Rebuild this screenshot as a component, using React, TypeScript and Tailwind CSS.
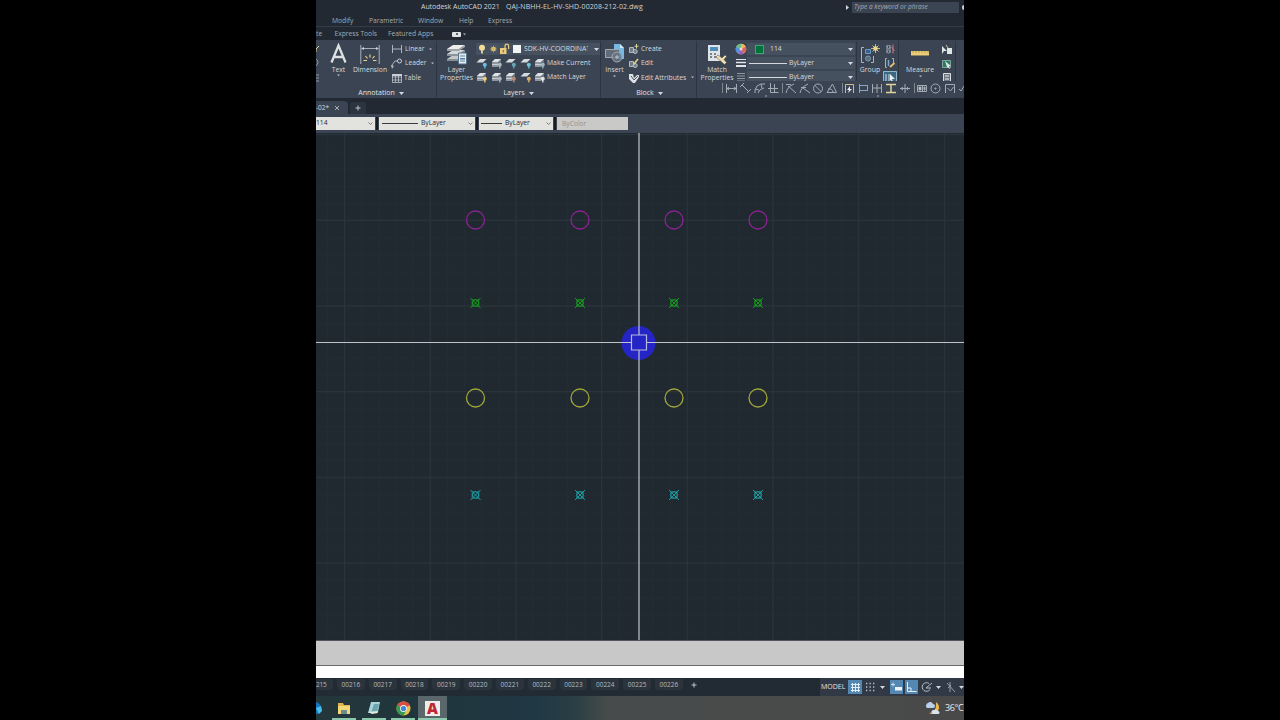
import React from 'react';

type IconProps = {
  w?: number;
  h?: number;
  className?: string;
  children: React.ReactNode;
};

const Icon = ({ w = 12, h = 12, className = '', children }: IconProps) => (
  <svg width={w} height={h} viewBox={`0 0 ${w} ${h}`} fill="none" className={`shrink-0 ${className}`}>
    {children}
  </svg>
);

const Arrow = ({ small = false }: { small?: boolean }) => (
  <Icon w={5} h={3}>
    {small ? <path d="M1 .5h3L2.5 2.3z" fill="#b9c0c9" /> : <path d="M0 0h5L2.5 3z" fill="#d5d9df" />}
  </Icon>
);

const LayerIcon = ({ badge, alt = false }: { badge: string; alt?: boolean }) => (
  <Icon>
    {alt ? (
      <>
        <path d="M1 5l3-3h6L7 5v5H1z" fill="#8e979f" />
        <path d="M7 5l3-3v5l-3 3z" fill="#68727d" />
        <path d="M1 5l3-3h6L7 5z" fill="#dfe3e6" />
        <path d="M1 7.500h6" stroke="#c9ced3" />
      </>
    ) : (
      <path d="M.5 5.500L4 2h6.500L7 5.500z" fill="#d5dade" />
    )}
    <circle cx="8.800" cy="7.800" r="2" fill={badge} />
    <path d="M8.800 9v2.500" stroke={badge} strokeWidth="1.300" />
  </Icon>
);

const LayersLarge = () => (
  <Icon w={22} h={22}>
    <path d="M1 15l6-4h12l-6 4z" fill="#c3c8cb" />
    <path d="M1 15v2h12l6-4v-2l-6 4z" fill="#878f96" />
    <path d="M1 10l6-4h12l-6 4z" fill="#d5d8da" />
    <path d="M1 10v2h12l6-4V6l-6 4z" fill="#8b949b" />
    <path d="M1 5l6-4h12l-6 4z" fill="#eceeed" />
    <path d="M1 5v2h12l6-4V1l-6 4z" fill="#9da4aa" />
    <path d="M12.500 9h8v11h-8z" fill="#e4eaee" stroke="#56758d" />
    <path d="M14 12h5M14 17h5" stroke="#6d8799" />
    <path d="M14 14h5v1.500h-5z" fill="#4b82ad" />
  </Icon>
);

const DimensionIcon = () => (
  <Icon w={20} h={20}>
    <path d="M.8 0v19M19.200 0v19M2 3.500h16" stroke="#a9b0b9" />
    <path d="M1 3.500l3-1.500v3zM19 3.500l-3-1.500v3z" fill="#c9ced4" />
    <path d="M10 9.500v3M5.500 11l2 2.500M14.500 11l-2 2.500M3.500 15.500H7M13 15.500h3.500" stroke="#e8d68e" strokeWidth="1.200" />
  </Icon>
);

const InsertIcon = () => (
  <Icon w={21} h={21}>
    <path d="M10 1h6l4 4v11H10z" fill="#76b8e4" />
    <path d="M16 1v4h4z" fill="#d1e9f7" />
    <path d="M1.500 6.500h14v8h-14z" fill="#626c78" stroke="#a1a8b0" />
    <circle cx="13" cy="14" r="5" fill="#697684" fillOpacity=".8" stroke="#a1a8b0" />
    <path d="M13 12v4M11 14h4" stroke="#c8cdd2" strokeWidth=".8" />
  </Icon>
);

const MatchIcon = () => (
  <Icon w={20} h={21}>
    <path d="M1 1h12v16H1z" fill="#dfe4e8" />
    <path d="M3 3h8v4H3z" fill="#4e8db9" />
    <path d="M3 10h2M7 10h2M3 13h2M7 13h2" stroke="#59636e" strokeWidth="1.500" />
    <path d="M9 13l2-2 4 3 3-3 1.500 1.500-2.500 3 2.500 3-2 2z" fill="#efe0b3" stroke="#625d4b" strokeWidth=".6" />
  </Icon>
);

const ColorWheel = () => (
  <Icon>
    <circle cx="6" cy="6" r="5.300" fill="#d8c25c" />
    <path d="M6 6V.7a5.300 5.300 0 0 1 4.700 3z" fill="#eeb35b" />
    <path d="M6 6l4.700-2.200a5.300 5.300 0 0 1-2 6.500z" fill="#e0625f" />
    <path d="M6 6l2.700 4.500A5.300 5.300 0 0 1 3 10.500z" fill="#9f5fc0" />
    <path d="M6 6l-3 4.500a5.300 5.300 0 0 1-1.700-6.800z" fill="#5290dd" />
    <path d="M6 6L1.300 3.700A5.300 5.300 0 0 1 6 .7z" fill="#66bd83" />
    <circle cx="6" cy="6" r="1.500" fill="#e8ddd4" />
  </Icon>
);

const Bulb = () => (
  <Icon w={12}>
    <circle cx="6" cy="4.700" r="3" fill="#f4db98" />
    <path d="M5 7h2v3.500H5z" fill="#d7c9a3" />
  </Icon>
);

const Sun = () => (
  <Icon w={11}>
    <circle cx="5.500" cy="6" r="2.300" fill="#f0cd79" />
    <path d="M5.500 2.500v7M2 6h7M3 3.500l5 5M8 3.500l-5 5" stroke="#c9ad68" strokeWidth=".7" />
  </Icon>
);

const Lock = () => (
  <Icon w={12}>
    <path d="M1 5h6.500v6H1z" fill="#ebca7c" />
    <path d="M6 5.500V3a1.800 1.800 0 0 1 3.600 0v3" stroke="#ebca7c" strokeWidth="1.200" />
    <path d="M4.300 7v2.500" stroke="#7b653a" />
  </Icon>
);

const BlockIcon = ({ kind }: { kind: string }) => (
  <Icon>
    {kind === 'Edit Attributes' ? (
      <>
        <path d="M1 2h4l1 4 3-3h2v2L7 11H5L1 7z" fill="#dfe2e4" />
        <path d="M3 4l3 4 4-4" stroke="#4c5664" />
      </>
    ) : (
      <>
        <path d="M1.500 4.500h4v5h-4z" fill="#717b86" stroke="#b3bac0" />
        <circle cx="7.200" cy="8.500" r="2" fill="#717b86" stroke="#bdc4ca" />
        {kind === 'Create' ? (
          <path d="M8.500 1v4.500M6.500 3.200h4" stroke="#d7d891" />
        ) : (
          <path d="M6 7l4-5" stroke="#e6cc8c" strokeWidth="1.700" />
        )}
      </>
    )}
  </Icon>
);

const menus = [
  { name: 'Modify', cell: 'w-[37px]' },
  { name: 'Parametric', cell: 'w-[49px]' },
  { name: 'Window', cell: 'w-[41px]' },
  { name: 'Help', cell: 'w-[29px]' },
  { name: 'Express', cell: 'w-[40px]' },
];

const sheets = ['00216', '00217', '00218', '00219', '00220', '00221', '00222', '00223', '00224', '00225', '00226'];

const TitleBar = () => (
  <header className="flex h-[15px] items-center pl-[105px] text-[7px] text-[#d0d3d7]">
    <span className="w-[85px] tracking-[-0.05px]">Autodesk AutoCAD 2021</span>
    <span className="w-[340px] tracking-[0.08px]">QAJ-NBHH-EL-HV-SHD-00208-212-02.dwg</span>
    <Icon w={3} h={5} className="-mt-px">
      <path d="M0 0l3 2.500L0 5z" fill="#d0d3d7" />
    </Icon>
    <div className="-mt-px ml-[3px] h-[11px] w-[107px] bg-[#3b4452] pl-[2px] text-[6.500px] leading-[10px] text-[#a6acb5] italic">
      Type a keyword or phrase
    </div>
    <div className="ml-[3px] h-[5px] w-[2px] rounded-l-full bg-[#c7ccd1]" />
  </header>
);

const MenuBar = () => (
  <>
    <nav className="flex h-[12px] items-center border-b border-[#343c47] pt-px pl-[16px] text-[6.700px] text-[#a4aab3]">
      {menus.map((m) => (
        <span key={m.name} className={m.cell}>{m.name}</span>
      ))}
    </nav>
    <nav className="flex h-[13px] items-center pt-px text-[6.700px] text-[#a4aab3]">
      <span className="w-[18.500px]">te</span>
      <span className="w-[53.500px]">Express Tools</span>
      <span className="w-[64px]">Featured Apps</span>
      <div className="mr-[1px] flex h-[5px] w-[9px] items-center justify-center rounded-[1px] bg-[#e1e4e6]">
        <div className="size-[2px] rounded-full bg-[#343c47]" />
      </div>
      <Arrow small />
    </nav>
  </>
);

const PanelTitle = ({ children }: { children: string }) => (
  <div className="flex h-[12px] items-center justify-center gap-[4px] text-[7px] text-[#e0e2e5]">
    {children}
    <Arrow />
  </div>
);

const Annotation = () => (
  <section className="w-[121px] shrink-0 border-r border-[#2d3541]">
    <div className="flex h-[46px]">
      <div className="flex w-[7px] flex-col pt-[3px]">
        <Icon w={4} h={42}>
          <path d="M0 5l3-3M0 8V4" stroke="#ead897" />
          <path d="M0 15q4 3 0 7M0 31h3M0 34h3M0 37h3" stroke="#939ba6" />
        </Icon>
      </div>
      <div className="flex w-[31px] flex-col items-center pt-[2px]">
        <Icon w={17} h={20}>
          <path d="M1.500 19.500L8.500 2.500l7 17M4 14h9" stroke="#dce0e3" strokeWidth="2.300" />
        </Icon>
        <span className="mt-[2px] text-[6.800px] leading-[9px]">Text</span>
        <Arrow small />
      </div>
      <div className="flex w-[32px] flex-col items-center pt-[4px]">
        <DimensionIcon />
        <span className="text-[6.800px] leading-[9px]">Dimension</span>
      </div>
      <div className="flex w-[49px] flex-col pt-[1px] pl-[5px] text-[6.700px]">
        <div className="flex h-[14.300px] items-center">
          <Icon>
            <path d="M1.500 2v8M10.500 2v8M2 6h8" stroke="#adb5be" />
          </Icon>
          <span className="w-[25px] pl-[2px]">Linear</span>
          <Arrow small />
        </div>
        <div className="flex h-[14.300px] items-center">
          <Icon>
            <path d="M1 10V8l3-4h3" stroke="#adb5be" />
            <path d="M0 8l3 1-2 3z" fill="#adb5be" />
            <circle cx="8.500" cy="4" r="2" stroke="#c7ced6" />
          </Icon>
          <span className="w-[27px] pl-[2px]">Leader</span>
          <Arrow small />
        </div>
        <div className="flex h-[14.300px] items-center">
          <Icon>
            <path d="M1.500 2.500h9v8h-9zM1.500 5h9M1.500 8h9M4.500 3v7M7.500 3v7" stroke="#bec5cc" strokeWidth=".8" />
            <path d="M1 2h10v2H1z" fill="#c8ced3" />
          </Icon>
          <span className="pl-[1px]">Table</span>
        </div>
      </div>
    </div>
    <div className="pl-[10px]"><PanelTitle>Annotation</PanelTitle></div>
  </section>
);

const Layers = () => (
  <section className="w-[164px] shrink-0 border-r border-[#2d3541]">
    <div className="flex h-[46px]">
      <div className="flex w-[39px] flex-col items-center pt-[3px] text-center text-[6.800px] leading-[8px]">
        <LayersLarge />
        <span>Layer</span>
        <span>Properties</span>
      </div>
      <div className="flex flex-col pt-[1px] text-[6.800px]">
        <div className="mt-px flex h-[12px] w-[124px] items-center bg-[#465160]">
          <Bulb />
          <Sun />
          <Lock />
          <div className="ml-[2px] size-[8px] bg-[#f3f4f4]" />
          <span className="ml-[3px] w-[64px] overflow-hidden text-[6.900px]">SDK-HV-COORDINAT</span>
          <span className="ml-[6px]"><Arrow /></span>
        </div>
        <div className="mt-[1px] flex h-[14.300px] items-center gap-[2.500px]">
          <LayerIcon badge="#69bfe3" />
          <LayerIcon badge="#aeb6bd" alt />
          <LayerIcon badge="#60a9b7" />
          <LayerIcon badge="#6ec4d8" />
          <LayerIcon badge="#9db6c1" alt />
          <span className="ml-[-1.500px]">Make Current</span>
        </div>
        <div className="flex h-[14.300px] items-center gap-[2.500px]">
          <LayerIcon badge="#efce7a" alt />
          <LayerIcon badge="#aeb6bd" alt />
          <LayerIcon badge="#bb8d78" alt />
          <LayerIcon badge="#d7ad6e" />
          <LayerIcon badge="#e1e5df" alt />
          <span className="ml-[-1.500px]">Match Layer</span>
        </div>
      </div>
    </div>
    <PanelTitle>Layers</PanelTitle>
  </section>
);

const Block = () => (
  <section className="w-[96px] shrink-0 border-r border-[#2d3541]">
    <div className="flex h-[46px]">
      <div className="flex w-[27px] flex-col items-center pt-[2px]">
        <InsertIcon />
        <span className="text-[6.800px] leading-[11px]">Insert</span>
        <Arrow small />
      </div>
      <div className="flex flex-col pt-[1px] text-[6.800px]">
        {['Create', 'Edit', 'Edit Attributes'].map((name) => (
          <div key={name} className="flex h-[14.300px] items-center">
            <BlockIcon kind={name} />
            <span className="ml-[1px] w-[49px]">{name}</span>
            {name === 'Edit Attributes' && <Arrow small />}
          </div>
        ))}
      </div>
    </div>
    <div className="pl-[2px]"><PanelTitle>Block</PanelTitle></div>
  </section>
);

const Properties = () => (
  <section className="w-[160px] shrink-0 border-r border-[#2d3541]">
    <div className="flex">
      <div className="flex w-[40px] flex-col items-center pt-[3px] text-center text-[6.800px] leading-[8px]">
        <MatchIcon />
        <span className="mt-[1px]">Match</span>
        <span>Properties</span>
      </div>
      <div className="-ml-[2px] flex w-[12px] flex-col gap-[2px] pt-[2px]">
        <ColorWheel />
        <Icon>
          <path d="M1 2.500h10" stroke="#e1e5e8" />
          <path d="M1 5.500h10" stroke="#e1e5e8" strokeWidth="1.500" />
          <path d="M1 9h10" stroke="#e1e5e8" strokeWidth="2" />
        </Icon>
        <Icon>
          <path d="M2 2.500h8M2 5h8M2 7.500h8M2 10h8" stroke="#90979f" />
        </Icon>
      </div>
      <div className="flex w-[108px] flex-col gap-[2px] pt-[2px] text-[6.800px]">
        <div className="flex h-[12px] items-center bg-[#465160] pl-[8px]">
          <div className="size-[9px] border border-[#43a371] bg-[#00723b]" />
          <span className="ml-[6px] w-[78px]">114</span>
          <Arrow />
        </div>
        {['linetype', 'lineweight'].map((k) => (
          <div key={k} className="flex h-[12px] items-center bg-[#465160] pl-[2px]">
            <div className="h-px w-[38px] bg-[#d5d9dd]" />
            <span className="ml-[2px] w-[59px]">ByLayer</span>
            <Arrow />
          </div>
        ))}
      </div>
    </div>
  </section>
);

const Groups = () => (
  <section className="flex w-[42px] shrink-0 border-r border-[#2d3541]">
    <div className="flex w-[26px] flex-col items-center pt-[3px]">
      <Icon w={20} h={21}>
        <path d="M4 3.500H1.500v15H4M11 18.500h2.500V12" stroke="#a8b6c1" />
        <path d="M5.500 5.500h5v4h-5z" fill="#3c5f83" stroke="#699dcb" />
        <circle cx="8" cy="14.500" r="2.500" fill="#526c80" stroke="#8299ac" />
        <circle cx="15.500" cy="4.500" r="2.300" fill="#efd889" />
        <path d="M15.500 0v9M11 4.500h9M12.500 1.500l6 6M18.500 1.500l-6 6" stroke="#efd889" strokeWidth=".8" />
      </Icon>
      <span className="text-[6.900px] leading-[10px]">Group</span>
    </div>
    <div className="flex flex-col gap-[2px] pt-[2px]">
      <Icon w={14}>
        <path d="M4 2v8M7 2v8" stroke="#9aa4ae" />
        <circle cx="5.500" cy="4" r="1.500" stroke="#85a3b9" />
        <circle cx="5.500" cy="8.500" r="1.500" stroke="#85a3b9" />
        <path d="M10 1.500v9M8.500 4l3 4" stroke="#d77282" />
      </Icon>
      <Icon w={14}>
        <path d="M4 1.500H2.500v9H4M9 1.500h1.500V6" stroke="#aab3bd" />
        <path d="M5.500 3v6" stroke="#78a9cf" strokeWidth="1.500" />
        <path d="M7 10l4.500-4" stroke="#e7bc78" strokeWidth="1.800" />
      </Icon>
      <Icon w={14} className="bg-[#3c6883]">
        <path d="M.5.5h13v11H.5z" stroke="#8fb8ce" />
        <path d="M3 3v7M6 3v7" stroke="#d1e0e9" />
        <path d="M7 3l5 5H9l1 3-3-2z" fill="#eef1f2" />
      </Icon>
    </div>
  </section>
);

const Utilities = () => (
  <>
    <section className="flex w-[57px] shrink-0 border-r border-[#2d3541]">
      <div className="flex w-[42px] flex-col items-center pt-[9px]">
        <Icon w={18} h={6}>
          <path d="M0 1h18v4.500H0z" fill="#e9cb78" />
          <path d="M2 1v2M5 1v2M8 1v2M11 1v2M14 1v2M17 1v2" stroke="#a68639" strokeWidth=".6" />
        </Icon>
        <span className="mt-[8px] text-[6.900px] leading-[11px]">Measure</span>
        <Arrow small />
      </div>
      <div className="flex flex-col gap-[2px] pt-[3px]">
        <Icon>
          <path d="M1 2l5 5H3l-2 3zM6 4h5v6H6z" fill="#dfe4e4" />
          <path d="M5 1l2 3" stroke="#d9c783" />
        </Icon>
        <Icon>
          <path d="M1.500 2.500h8v7h-8z" fill="#2d7b65" stroke="#7ca69c" />
          <path d="M4 3l6 5H8l1 3-3-2z" fill="#dfe4e4" />
        </Icon>
        <Icon>
          <path d="M2.500 1.500h7v10h-7z" fill="#6c7680" stroke="#d9dddf" />
          <path d="M4 4h4M4 7h4M4 9.500h4" stroke="#eceeef" />
        </Icon>
      </div>
    </section>
    <div className="grow" />
  </>
);

const DimToolbar = () => (
  <div className="absolute top-[41px] right-0 h-[16px] w-[244px] bg-[#3b4452]">
    <svg width="244" height="16" viewBox="720 81 244 16" fill="none" stroke="#a3abb4" strokeWidth="1">
      <path d="M722.500 83v10M782.500 83v10M842.500 83v10M914.500 83v10" stroke="#7d8791" />
      <path d="M726.500 84v9M736.500 84v9M727 88.500h9M729 87l-2 1.500 2 1.500M734 87l2 1.500-2 1.500" />
      <path d="M742 85l7 7M740 87l4-4M747 93l4-4" />
      <path d="M755 93v-3q1-5 6-6h4M758 93q1-4 6-5M755 89l4 1M761 84l1 4" />
      <path d="M770.500 83v9.500h8M774.500 84v8M768 88.500h10" />
      <path d="M786 93q1-6 8-9M786 84.500h5M788 86l8 7M800 93q1-6 8-9M801 87.500h5M803 88l7 5" />
      <circle cx="818" cy="88.500" r="4.500" />
      <path d="M814.500 85l7 7M827 92.500h9.500l-4-8.500zM828 89q4-1 5 3" />
      <path d="M845.500 93v-8.500h8V93" stroke="#d2bd8a" />
      <path d="M850 86l-3 4h2l-1 3 4-4h-2z" fill="#e7edf0" stroke="none" />
      <path d="M859.500 84v9M867.500 85v6M859 85.500h8M859 90.500h8" stroke="#8aa6c5" />
      <path d="M872.500 84v9M877 84v9M881.500 84v9M872 88h10" />
      <path d="M886 84.500h10M886 92.500h10M891 85v7" stroke="#e0d39b" strokeWidth="1.500" />
      <path d="M900 88.500h10M905 84v9M903 87l-2 1.500 2 1.500M907.500 87v3" />
      <path d="M917.500 85.500h9v6h-9zM922.500 86v5" />
      <path d="M919 87h2v3h-2zM924 87h1v3h-1z" fill="#cfd4d8" />
      <circle cx="935.500" cy="88.500" r="4.500" />
      <path d="M935.500 87.500v2M934.500 88.500h2M945.500 93V84.500h9V93M947.500 88l3 3 3-4M959 89l2 2 3-5" />
      <path d="M765 96h2M877 96h2" />
    </svg>
  </div>
);

const Ribbon = () => (
  <div className="relative flex h-[58px] overflow-hidden bg-[#3b4452] pt-px text-[#d6d9de]">
    <Annotation />
    <Layers />
    <Block />
    <Properties />
    <Groups />
    <Utilities />
    <DimToolbar />
  </div>
);

const FileTabs = () => (
  <div className="flex h-[16px] items-end bg-[#222932]">
    <div className="flex h-[13px] w-[32px] items-center rounded-tr-[4px] bg-[#3b4452] text-[6.500px] text-[#d0d4d9]">
      <span className="w-[18px]">-02*</span>
      <Icon w={6} h={6}>
        <path d="M1 1l4 4M5 1L1 5" stroke="#c5cbd2" strokeWidth=".8" />
      </Icon>
    </div>
    <div className="ml-[2px] flex h-[12px] w-[16px] items-center justify-center rounded-t-[3px] bg-[#2c3440]">
      <Icon w={6} h={6}>
        <path d="M3 .5v5M.5 3h5" stroke="#bdc4cb" />
      </Icon>
    </div>
  </div>
);

const Chevron = () => (
  <Icon w={5} h={4}>
    <path d="M.5.5l2 2 2-2" stroke="#60656a" strokeWidth=".8" />
  </Icon>
);

const Grip = () => <div className="mr-[1px] ml-[1px] h-[13px] w-[2px] bg-[#171c22]" />;

const PropertyBar = () => (
  <div className="flex h-[19px] items-center bg-[#3b4452] text-[6.700px] text-[#272b30]">
    <div className="flex h-[13px] w-[59px] items-center bg-[#e2e2df]">
      <span className="w-[52px]">114</span>
      <Chevron />
    </div>
    <Grip />
    <div className="flex h-[13px] w-[96px] items-center bg-[#e2e2df] pl-[3px]">
      <div className="h-px w-[36px] bg-[#3a3d40]" />
      <span className="w-[50px] pl-[3px]">ByLayer</span>
      <Chevron />
    </div>
    <Grip />
    <div className="flex h-[13px] w-[74px] items-center bg-[#e2e2df] pl-[2px]">
      <div className="h-px w-[21px] bg-[#3a3d40]" />
      <span className="w-[44px] pl-[3px]">ByLayer</span>
      <Chevron />
    </div>
    <Grip />
    <div className="h-[13px] w-[71px] bg-[#c9c9c7] pl-[5px] leading-[13px] text-[#92938f]">ByColor</div>
  </div>
);

const columns = [475.5, 580, 674, 758];

const PointMark = ({ x, y, color }: { x: number; y: number; color: string }) => (
  <g stroke={color} strokeWidth=".9">
    <path d={`M${x - 5} ${y - 5}l10 10M${x + 5} ${y - 5}l-10 10`} />
    <circle cx={x} cy={y} r="3.200" />
    <path d={`M${x - 3.5} ${y - 3.5}h7v7h-7z`} strokeOpacity=".5" />
  </g>
);

const Drawing = () => (
  <main className="h-[508px] bg-[#212930]">
    <svg width="648" height="508" viewBox="316 133 648 508" fill="none">
      <defs>
        <pattern id="minor" x="344" y="134.500" width="17.140" height="17.140" patternUnits="userSpaceOnUse">
          <path d="M0 .5h17.140M.5 0v17.140" stroke="#232b33" strokeWidth="1" />
        </pattern>
        <pattern id="major" x="344" y="134" width="85.700" height="85.700" patternUnits="userSpaceOnUse">
          <path d="M0 .5h85.700M.5 0v85.700" stroke="#2b343c" strokeWidth="1" />
        </pattern>
      </defs>
      <path d="M316 133h648v508H316z" fill="url(#minor)" />
      <path d="M316 133h648v508H316z" fill="url(#major)" />
      {columns.map((x) => (
        <React.Fragment key={x}>
          <circle cx={x} cy="220" r="9" stroke="#8c2294" strokeWidth="1.300" />
          <PointMark x={x} y={303} color="#14a51d" />
          <circle cx={x} cy="398" r="9" stroke="#a0a63a" strokeWidth="1.300" />
          <PointMark x={x} y={495} color="#1ba7ab" />
        </React.Fragment>
      ))}
      <circle cx="638.500" cy="343" r="17" fill="#2525c5" />
      <path d="M639 133v202M639 350v290M316 342.500h315M647 342.500h317" stroke="#c1c5c9" strokeWidth="1.200" />
      <path d="M631.500 335h15v15h-15z" stroke="#b5b9e2" strokeWidth="1.200" />
      <path d="M316 640.500h648" stroke="#55545d" />
    </svg>
  </main>
);

const StatusBar = () => (
  <div className="flex h-[18px] bg-[#222b33]">
    <div className="flex h-[13px] grow items-center text-[6.500px] text-[#b3b9bf]">
      <span className="flex h-[11px] w-[17px] items-center rounded-br-[4px] bg-[#2b343d] tracking-[-0.200px]">215</span>
      {sheets.map((s) => (
        <div key={s} className="w-[31.800px] shrink-0 pl-[4px]">
          <div className="flex h-[11px] items-center justify-center rounded-b-[4px] bg-[#2b343d]">{s}</div>
        </div>
      ))}
      <span className="ml-[8px]">
        <Icon w={6} h={6}>
          <path d="M3 .5v5M.5 3h5" stroke="#bdc4cb" />
        </Icon>
      </span>
    </div>
    <div className="flex w-[144px] shrink-0 items-center bg-[#303945] text-[7px] text-[#e0e3e6]">
      <span className="w-[30px] pl-[1px]">MODEL</span>
      <Icon w={14} h={14} className="bg-[#5587b3]">
        <path d="M4.500 3v9M7.500 3v9M10.500 3v9M3 4.500h9M3 7.500h9M3 10.500h9" stroke="#e2edf5" />
      </Icon>
      <Icon w={16} h={14}>
        <path d="M4 3.500h9M4 7h9M4 10.500h9" stroke="#bdc4ca" strokeWidth="1.300" strokeDasharray="1.300 2.200" />
      </Icon>
      <span className="mr-[5px] ml-[2px]"><Arrow /></span>
      <Icon w={13} h={14} className="bg-[#5587b3]">
        <path d="M3 2.500v4M1 4.500h4" stroke="#eef3f6" strokeWidth=".8" />
        <path d="M5 7h7v3.500H5z" fill="#eef3f6" />
      </Icon>
      <Icon w={13} h={14} className="ml-[2px] bg-[#5587b3]">
        <path d="M2.500 2v9.500h9M3 8h3v3" stroke="#e8f0f5" />
      </Icon>
      <Icon w={13} h={14} className="ml-[2px]">
        <path d="M9 3.500a4.300 4.300 0 1 0 1 6M6 8l6-5M6 8h5" stroke="#b8bfc6" />
      </Icon>
      <span className="ml-[3px]"><Arrow /></span>
      <Icon w={12} h={14} className="ml-[4px]">
        <path d="M2 3l8 9M5 2v10M3 8l3-3" stroke="#949eaa" />
      </Icon>
      <span className="ml-[2px]"><Arrow /></span>
    </div>
  </div>
);

const TaskBar = () => (
  <footer className="flex h-[24px] items-stretch bg-[linear-gradient(90deg,#24373b_0px,#20363c_100px,#203844_220px,#2c4044_262px,#484b4b_292px,#494949_648px)]">
    <div className="flex w-[12px] items-center">
      <Icon w={6} h={14}>
        <path d="M0 1q5 1 6 8L2 13H0z" fill="#1675bd" />
        <path d="M0 7l5-2 1 5-3 3z" fill="#48bee6" />
      </Icon>
    </div>
    <div className="flex w-[31px] flex-col items-center justify-end">
      <Icon w={14} h={13}>
        <path d="M1 1h5l1 2h6v9H1z" fill="#ddb44d" />
        <path d="M1 4h12v8H1z" fill="#f2d877" />
        <path d="M4 8h6v4H4z" fill="#698b91" />
      </Icon>
      <div className="mt-[3px] h-[2px] w-[24px] bg-[#8dc9ad]" />
    </div>
    <div className="flex w-[29px] flex-col items-center justify-end">
      <Icon w={14} h={14}>
        <path d="M4 1h9l-2 10-10 1z" fill="#a9d2d9" />
        <path d="M7 3h5l-2 8-6 1z" fill="#6ba6b0" />
        <path d="M1 11l9-1 1 2-6 1z" fill="#e2e8df" />
      </Icon>
      <div className="mt-[3px] h-[2px] w-[24px] bg-[#8dc9ad]" />
    </div>
    <div className="flex w-[30px] flex-col items-center justify-end">
      <Icon w={15} h={15}>
        <circle cx="7.500" cy="7.500" r="7" fill="#e6c244" />
        <path d="M7.500 7.500L1.400 4A7 7 0 0 1 13.800 4.500z" fill="#d94f43" />
        <path d="M1.400 4A7 7 0 0 0 7.500 14.500l3-5.500-3-1.500z" fill="#369856" />
        <circle cx="7.500" cy="7.500" r="3.500" fill="#eef1ec" />
        <circle cx="7.500" cy="7.500" r="2.600" fill="#4085d6" />
      </Icon>
      <div className="mt-[2px] h-[2px] w-[24px] bg-[#8dc9ad]" />
    </div>
    <div className="flex w-[29px] flex-col items-center justify-end bg-[#59676a]">
      <div className="flex size-[15px] items-center justify-center bg-[#eeecea] text-[15px] leading-none font-extrabold text-[#bf2632]">A</div>
      <div className="mt-[2px] h-[2px] w-full bg-[#8dc9ad]" />
    </div>
    <div className="ml-auto flex items-center text-[9px] text-[#eceeed]">
      <Icon w={15} h={15}>
        <path d="M10 1a6.500 6.500 0 1 1-7 11q8 0 7-11z" fill="#edb950" />
        <path d="M1 7a3 3 0 0 1 1-5 3 3 0 0 1 5 1 2 2 0 0 1 0 4z" fill="#bbd0eb" />
        <path d="M7 13a2 2 0 0 1 1-4 3 3 0 0 1 4 1 1.500 1.500 0 0 1 0 3z" fill="#dae4ef" />
      </Icon>
      <span className="w-[23px] pl-[4px] tracking-[-0.400px]">36°C</span>
    </div>
  </footer>
);

const App: React.FC = () => {
  return (
    <div className="flex h-[720px] w-[1280px] justify-center overflow-hidden bg-black font-['Open_Sans','Noto_Sans',sans-serif]">
      <div className="flex h-full w-[648px] flex-col overflow-hidden bg-[#222932] whitespace-nowrap">
        <TitleBar />
        <MenuBar />
        <Ribbon />
        <FileTabs />
        <PropertyBar />
        <Drawing />
        {/* Command line */}
        <div className="h-[25px] border-b border-[#6b6b6b] bg-[#c8c8c8]" />
        <div className="h-[12px] bg-white" />
        <StatusBar />
        <TaskBar />
      </div>
    </div>
  );
};

export default App;
